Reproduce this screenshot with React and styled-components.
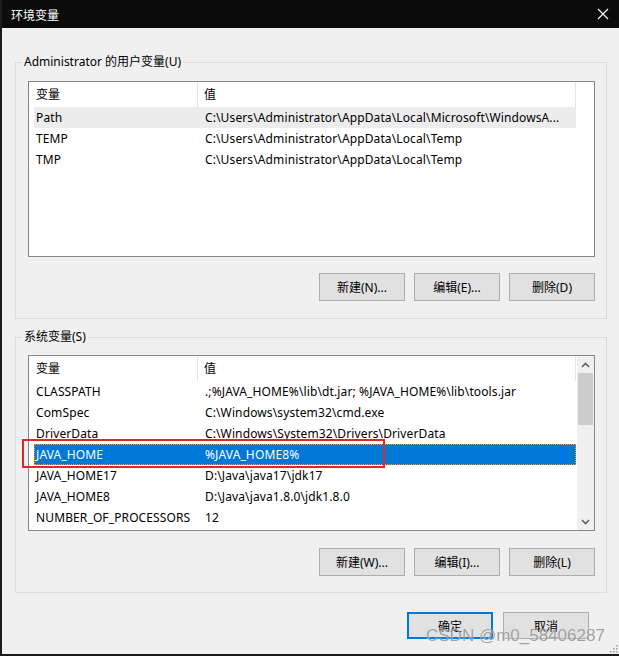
import React from "react";
import styled, { createGlobalStyle } from "styled-components";

const GlobalStyle = createGlobalStyle`
  html, body {
    margin: 0;
    padding: 0;
    background: #f0f0f0;
  }
  body {
    font-family: "Noto Sans", "Noto Sans CJK SC", sans-serif;
    font-size: 12px;
    color: #000;
  }
`;

const Window = styled.div`
  position: relative;
  width: 619px;
  height: 656px;
  box-sizing: border-box;
  border-left: 2px solid #1c1c1c;
  border-bottom: 2px solid #1c1c1c;
  background: #f0f0f0;
  display: flex;
  flex-direction: column;
  overflow: hidden;
`;

const TitleBar = styled.div`
  height: 28px;
  flex: none;
  margin-left: -2px;
  padding: 0 10px 0 11px;
  background: #0b0b0b;
  color: #fff;
  display: flex;
  align-items: center;
  justify-content: space-between;
  font-family: "Noto Sans CJK SC", sans-serif;
  font-size: 12px;
`;

const Body = styled.div`
  flex: 1;
  display: flex;
  flex-direction: column;
  padding: 0 12px 0 13px;
`;

const Group = styled.fieldset`
  margin: ${(p) => p.$top}px 0 0;
  padding: 0 0 ${(p) => p.$bottom}px;
  border: 1px solid #dcdcdc;
  min-width: 0;
  display: flex;
  flex-direction: column;
`;

const Legend = styled.legend`
  margin-left: 6px;
  padding: 0 2px;
  font-size: 12px;
  line-height: 16px;
`;

const ListView = styled.div`
  margin: ${(p) => p.$top}px 11px 0 12px;
  height: 176px;
  box-sizing: border-box;
  border: 1px solid #828790;
  background: #fff;
  display: flex;
`;

const ListContent = styled.div`
  width: 548px;
  flex: none;
  display: flex;
  flex-direction: column;
`;

const Header = styled.div`
  height: 25px;
  display: flex;
  width: 547px;
`;

const HeadCell = styled.div`
  width: ${(p) => p.$w}px;
  padding-left: ${(p) => p.$pad}px;
  box-sizing: border-box;
  border-right: 1px solid #e5e5e5;
  line-height: 25px;
`;

const Row = styled.div`
  position: relative;
  margin-left: 5px;
  width: 542px;
  height: 21px;
  line-height: 21px;
  display: flex;
  white-space: nowrap;
  letter-spacing: 0.12px;
  background: ${(p) => (p.$selected ? "#0078d7" : p.$hover ? "#ececec" : "transparent")};
  color: ${(p) => (p.$selected ? "#fff" : "#000")};
  outline: ${(p) => (p.$selected ? "1px dotted #f59a3c" : "none")};
  outline-offset: -1px;
`;

const NameCell = styled.div`
  width: 163px;
  padding-left: 2px;
  flex: none;
  overflow: hidden;
`;

const ValueCell = styled.div`
  flex: 1;
  padding-left: 6px;
  overflow: hidden;
`;

const ScrollBar = styled.div`
  width: 17px;
  flex: none;
  background: #f0f0f0;
  display: flex;
  flex-direction: column;
`;

const ScrollArrow = styled.div`
  height: 17px;
  display: flex;
  align-items: center;
  justify-content: center;
`;

const ScrollTrack = styled.div`
  flex: 1;
  padding: 0 1px;
`;

const Thumb = styled.div`
  height: 52px;
  background: #cdcdcd;
`;

const ButtonRow = styled.div`
  display: flex;
  justify-content: flex-end;
  gap: 9px;
  margin: ${(p) => p.$top}px 11px 0 0;
`;

const Button = styled.button`
  width: 86px;
  height: ${(p) => p.$h || 28}px;
  box-sizing: border-box;
  margin: 0;
  padding: 0;
  background: #e1e1e1;
  border: ${(p) => (p.$default ? "2px solid #0078d7" : "1px solid #adadad")};
  font-family: "Noto Sans", "Noto Sans CJK SC", sans-serif;
  font-size: 12px;
  color: #000;
`;

const Footer = styled.div`
  display: flex;
  justify-content: flex-end;
  gap: 10px;
  margin: 19px 18px 0 0;
`;

const Annotation = styled.div`
  position: absolute;
  left: 20px;
  top: 439px;
  width: 363px;
  height: 29px;
  box-sizing: border-box;
  border: 2px solid #e0262d;
  pointer-events: none;
`;

const Watermark = styled.div`
  position: absolute;
  left: 424px;
  top: 626px;
  font-family: "Liberation Sans", Arial, sans-serif;
  font-size: 17px;
  color: rgba(100, 100, 100, 0.62);
  text-shadow: 0 0 1px rgba(255, 255, 255, 0.9);
  white-space: nowrap;
  pointer-events: none;
`;

const Grip = styled.svg`
  position: absolute;
  right: 1px;
  bottom: 1px;
`;

const userVars = [
  ["Path", "C:\\Users\\Administrator\\AppData\\Local\\Microsoft\\WindowsA..."],
  ["TEMP", "C:\\Users\\Administrator\\AppData\\Local\\Temp"],
  ["TMP", "C:\\Users\\Administrator\\AppData\\Local\\Temp"],
];

const sysVars = [
  ["CLASSPATH", ".;%JAVA_HOME%\\lib\\dt.jar; %JAVA_HOME%\\lib\\tools.jar"],
  ["ComSpec", "C:\\Windows\\system32\\cmd.exe"],
  ["DriverData", "C:\\Windows\\System32\\Drivers\\DriverData"],
  ["JAVA_HOME", "%JAVA_HOME8%"],
  ["JAVA_HOME17", "D:\\Java\\java17\\jdk17"],
  ["JAVA_HOME8", "D:\\Java\\java1.8.0\\jdk1.8.0"],
  ["NUMBER_OF_PROCESSORS", "12"],
];

function Chevron({ down }) {
  return (
    <svg width="9" height="6" viewBox="0 0 9 6">
      <polyline
        points={down ? "1,1 4.5,4.5 8,1" : "1,5 4.5,1.5 8,5"}
        fill="none"
        stroke="#606060"
        strokeWidth="1.6"
      />
    </svg>
  );
}

function VarList({ top, rows, hover, selected, scroll }) {
  return (
    <ListView $top={top}>
      <ListContent>
        <Header>
          <HeadCell $w={169} $pad={7}>变量</HeadCell>
          <HeadCell $w={378} $pad={6}>值</HeadCell>
        </Header>
        {rows.map(([name, value], i) => (
          <Row key={name} $hover={i === hover} $selected={i === selected}>
            <NameCell>{name}</NameCell>
            <ValueCell>{value}</ValueCell>
          </Row>
        ))}
      </ListContent>
      {scroll && (
        <ScrollBar>
          <ScrollArrow>
            <Chevron />
          </ScrollArrow>
          <ScrollTrack>
            <Thumb />
          </ScrollTrack>
          <ScrollArrow>
            <Chevron down />
          </ScrollArrow>
        </ScrollBar>
      )}
    </ListView>
  );
}

export default function App() {
  return (
    <>
      <GlobalStyle />
      <Window>
        <TitleBar>
          <span>环境变量</span>
          <svg width="12" height="12" viewBox="0 0 12 12">
            <path d="M1 1 L11 11 M11 1 L1 11" stroke="#fff" strokeWidth="1.1" />
          </svg>
        </TitleBar>
        <Body>
          <Group $top={26} $bottom={17}>
            <Legend>Administrator 的用户变量(U)</Legend>
            <VarList top={11} rows={userVars} hover={0} />
            <ButtonRow $top={16}>
              <Button>新建(N)...</Button>
              <Button>编辑(E)...</Button>
              <Button>删除(D)</Button>
            </ButtonRow>
          </Group>
          <Group $top={10} $bottom={16}>
            <Legend>系统变量(S)</Legend>
            <VarList top={10} rows={sysVars} selected={3} scroll />
            <ButtonRow $top={17}>
              <Button>新建(W)...</Button>
              <Button>编辑(I)...</Button>
              <Button>删除(L)</Button>
            </ButtonRow>
          </Group>
          <Footer>
            <Button $default $h={27}>确定</Button>
            <Button $h={27}>取消</Button>
          </Footer>
        </Body>
        <Annotation />
        <Watermark>CSDN @m0_58406287</Watermark>
        <Grip width="9" height="9" viewBox="0 0 9 9">
          {[[7, 1], [4, 4], [7, 4], [1, 7], [4, 7], [7, 7]].map(([x, y]) => (
            <rect key={`${x}-${y}`} x={x} y={y} width="1.5" height="1.5" fill="#a0a0a0" />
          ))}
        </Grip>
      </Window>
    </>
  );
}
